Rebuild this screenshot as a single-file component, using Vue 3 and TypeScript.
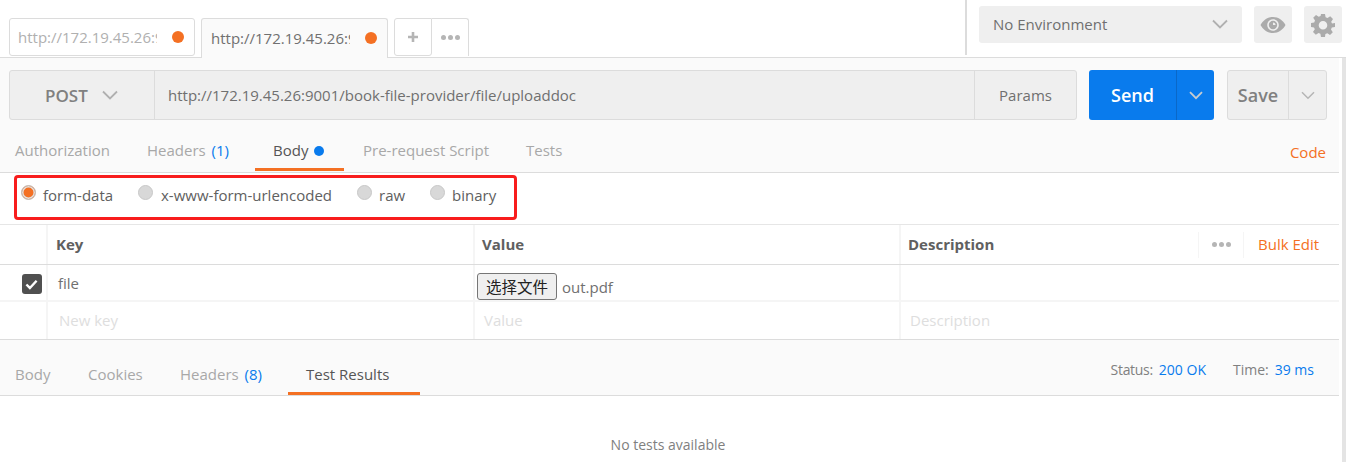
<script setup lang="ts">
const radios = [
  { label: 'form-data', on: true, cls: 'r1' },
  { label: 'x-www-form-urlencoded', on: false, cls: 'r2' },
  { label: 'raw', on: false, cls: 'r3' },
  { label: 'binary', on: false, cls: 'r4' },
]
</script>

<template>
  <div class="page">
    <div class="main">
      <header class="top">
        <div class="tabs">
          <div class="tab first">
            <span class="tab-url">http://172.19.45.26:9</span>
            <i class="dot"></i>
          </div>
          <div class="tab second">
            <span class="tab-url">http://172.19.45.26:9</span>
            <i class="dot"></i>
          </div>
          <div class="tab-tools">
            <div class="plus">
              <svg width="12" height="12" viewBox="0 0 12 12"><path d="M6 1v10M1 6h10" stroke="#b5b5b5" stroke-width="2.6" fill="none" /></svg>
            </div>
            <div class="more">
              <i></i><i></i><i></i>
            </div>
          </div>
        </div>
        <div class="env-area">
          <div class="env">
            <span>No Environment</span>
            <svg width="16" height="10" viewBox="0 0 16 10"><path d="M1 1.5l7 7 7-7" stroke="#b0b0b0" stroke-width="1.8" fill="none" /></svg>
          </div>
          <div class="icon-btn">
            <svg width="26" height="16" viewBox="0 0 26 16">
              <path fill-rule="evenodd" fill="#ababab" d="M13 0C7.5 0 3 3.4 0.5 8 3 12.6 7.5 16 13 16s10-3.4 12.5-8C23 3.4 18.5 0 13 0zm0 2.2c3.2 0 5.8 2.6 5.8 5.8s-2.6 5.8-5.8 5.8-5.8-2.6-5.8-5.8 2.6-5.8 5.8-5.8z" />
              <path fill-rule="evenodd" fill="#ababab" d="M13 3.8a4.2 4.2 0 1 0 0 8.4 4.2 4.2 0 0 0 0-8.4zm0 1.7a2.5 2.5 0 0 1 2.5 2.5h-2.5z" />
            </svg>
          </div>
          <div class="icon-btn">
            <svg width="24" height="24" viewBox="0 0 24 24">
              <path fill-rule="evenodd" fill="#ababab" d="M10 1h4l.6 3.2 1.900.8 2.700-1.800 2.800 2.800-1.800 2.700.8 1.900L24 10v4l-3.200.6-.8 1.900 1.800 2.700-2.800 2.800-2.700-1.800-1.900.8L14 24h-4l-.6-3.200-1.900-.8-2.700 1.800-2.800-2.800 1.800-2.700-.8-1.900L0 14v-4l3.200-.6.8-1.900-1.800-2.700 2.800-2.800 2.700 1.800 1.900-.8zM12 8a4.300 4.300 0 1 0 0 8.600A4.300 4.300 0 0 0 12 8z" />
            </svg>
          </div>
        </div>
      </header>

      <section class="url-row">
        <div class="url-box">
          <div class="method">
            <span>POST</span>
            <svg width="16" height="10" viewBox="0 0 16 10"><path d="M1 1.5l7 7 7-7" stroke="#b0b0b0" stroke-width="1.8" fill="none" /></svg>
          </div>
          <div class="url">http://172.19.45.26:9001/book-file-provider/file/uploaddoc</div>
          <div class="params">Params</div>
        </div>
        <div class="send">
          <span class="send-l">Send</span>
          <span class="send-r">
            <svg width="14" height="9" viewBox="0 0 14 9"><path d="M1 1.2l6 6 6-6" stroke="#c7ccd0" stroke-width="1.8" fill="none" /></svg>
          </span>
        </div>
        <div class="save">
          <span class="save-l">Save</span>
          <span class="save-r">
            <svg width="14" height="9" viewBox="0 0 14 9"><path d="M1 1.2l6 6 6-6" stroke="#b5b5b5" stroke-width="1.5" fill="none" /></svg>
          </span>
        </div>
      </section>

      <nav class="req-tabs">
        <span class="t-auth">Authorization</span>
        <span class="t-head">Headers <b class="count">(1)</b></span>
        <span class="t-body">Body <i class="blue-dot"></i></span>
        <span class="t-pre">Pre-request Script</span>
        <span class="t-tests">Tests</span>
        <span class="code">Code</span>
      </nav>

      <section class="radio-row">
        <div class="annot">
          <label v-for="r in radios" :key="r.label" class="radio" :class="r.cls">
            <i class="circle" :class="{ on: r.on }"></i>
            <span>{{ r.label }}</span>
          </label>
        </div>
      </section>

      <section class="table">
        <div class="row head">
          <div class="c0"></div>
          <div class="c1">Key</div>
          <div class="c2">Value</div>
          <div class="c3">
            <span>Description</span>
            <div class="bulk">
              <div class="dots"><i></i><i></i><i></i></div>
              <span class="bulk-edit">Bulk Edit</span>
            </div>
          </div>
        </div>
        <div class="row data">
          <div class="c0">
            <div class="check">
              <svg width="13" height="11" viewBox="0 0 12 10"><path d="M1.3 5l3.2 3.2L10.7 1.5" stroke="#fff" stroke-width="2.2" fill="none" /></svg>
            </div>
          </div>
          <div class="c1 file-key">file</div>
          <div class="c2 file-cell">
            <button type="button" class="file-btn">选择文件</button>
            <span class="file-name">out.pdf</span>
          </div>
          <div class="c3"></div>
        </div>
        <div class="row new">
          <div class="c0"></div>
          <div class="c1">New key</div>
          <div class="c2">Value</div>
          <div class="c3">Description</div>
        </div>
      </section>

      <nav class="res-tabs">
        <span class="rt-body">Body</span>
        <span class="rt-cookies">Cookies</span>
        <span class="rt-head">Headers <b class="count">(8)</b></span>
        <span class="rt-test">Test Results</span>
        <div class="status">
          <span class="s-l narrow">Status:</span><span class="s-v">200 OK</span>
          <span class="s-l s-time">Time:</span><span class="s-v">39 ms</span>
        </div>
      </nav>

      <section class="results">No tests available</section>
    </div>
    <div class="scrollbar"></div>
  </div>
</template>

<style>
html, body { margin: 0; padding: 0; background: #fff; overflow: hidden; }
</style>

<style scoped>
.page {
  width: 1346px;
  height: 462px;
  display: flex;
  overflow: hidden;
  font-family: "Open Sans", sans-serif;
  font-size: 15px;
  color: #808080;
  background: #fff;
}
.main { width: 1339px; flex: none; }
.scrollbar { flex: 1; background: #e4e4e4; margin: 58px 0 0 3px; }
i { display: block; font-style: normal; }
b { font-weight: 400; }

.top {
  height: 57px;
  width: 1346px;
  border-bottom: 1px solid #dcdcdc;
  display: flex;
  justify-content: space-between;
  background: #fff;
  box-sizing: content-box;
}
.tabs { display: flex; padding: 18px 0 0 9px; gap: 6px; }
.tab {
  box-sizing: border-box;
  width: 186px;
  height: 38px;
  border: 1px solid #dcdcdc;
  border-radius: 3px;
  display: flex;
  align-items: center;
  padding: 0 10px 0 8px;
  justify-content: space-between;
}
.tab.first { color: #b0b0b0; background: #fff; }
.tab.second { width: 187px; height: 40px; border-bottom: 0; border-radius: 3px 3px 0 0; background: #fafafa; color: #707070; padding-left: 9px; padding-bottom: 2px; }
.tab-url { width: 139px; overflow: hidden; white-space: nowrap; display: block; }
.dot { width: 12px; height: 12px; border-radius: 50%; background: #f47023; flex: none; }
.tab-tools { display: flex; }
.plus {
  box-sizing: border-box;
  width: 38px;
  height: 38px;
  border: 1px solid #dcdcdc;
  border-radius: 3px 0 3px 3px;
  display: flex;
  align-items: center;
  justify-content: center;
}
.more {
  box-sizing: border-box;
  width: 37px;
  height: 38px;
  border: 1px solid #dcdcdc;
  border-left: 0;
  border-bottom: 0;
  border-radius: 0 3px 0 0;
  display: flex;
  align-items: center;
  justify-content: center;
  gap: 2px;
}
.more i, .dots i { width: 5px; height: 5px; border-radius: 50%; background: #b5b5b5; }
.env-area {
  width: 381px;
  height: 55px;
  box-sizing: border-box;
  border-left: 2px solid #dcdcdc;
  padding: 6px 4px 0 12px;
  display: flex;
  gap: 12px;
  align-items: flex-start;
}
.env {
  width: 263px;
  height: 37px;
  box-sizing: border-box;
  background: #efefef;
  border-radius: 3px;
  padding: 0 14px 1px;
  display: flex;
  align-items: center;
  justify-content: space-between;
  color: #707070;
}
.icon-btn {
  width: 38px;
  height: 37px;
  background: #efefef;
  border-radius: 3px;
  display: flex;
  align-items: center;
  justify-content: center;
}

.url-row {
  height: 72px;
  background: #fafafa;
  box-sizing: border-box;
  padding: 12px 0 0 9px;
  display: flex;
}
.url-box {
  width: 1068px;
  height: 50px;
  box-sizing: border-box;
  border: 1px solid #dcdcdc;
  border-radius: 3px;
  background: #efefef;
  display: flex;
  align-items: stretch;
}
.method {
  box-sizing: border-box;
  width: 145px;
  border-right: 1px solid #dcdcdc;
  display: flex;
  align-items: center;
  gap: 14px;
  padding-left: 35px;
  font-size: 17px;
  font-weight: 600;
  color: #808080;
}
.url { flex: 1; display: flex; align-items: center; padding-left: 13px; color: #707070; }
.params { width: 102px; box-sizing: border-box; border-left: 1px solid #dcdcdc; display: flex; align-items: center; justify-content: center; color: #707070; }
.send {
  margin-left: 12px;
  width: 125px;
  height: 50px;
  background: #097bed;
  border-radius: 3px;
  display: flex;
  color: #fff;
  font-size: 18px;
  font-weight: 600;
}
.send-l { width: 87px; display: flex; align-items: center; justify-content: center; border-right: 1px solid #0a68c8; }
.send-r { flex: 1; display: flex; align-items: center; justify-content: center; }
.save {
  margin-left: 13px;
  width: 100px;
  height: 50px;
  box-sizing: border-box;
  background: #efefef;
  border: 1px solid #dcdcdc;
  border-radius: 3px;
  display: flex;
  color: #808080;
  font-size: 18px;
  font-weight: 600;
}
.save-l { width: 60px; display: flex; align-items: center; justify-content: center; border-right: 1px solid #dcdcdc; }
.save-r { flex: 1; display: flex; align-items: center; justify-content: center; }

.req-tabs {
  height: 43px;
  box-sizing: border-box;
  background: #fafafa;
  border-bottom: 1px solid #dcdcdc;
  display: flex;
  align-items: flex-start;
  padding: 11px 13px 0 15px;
  color: #a8a8a8;
  line-height: 19px;
}
.t-auth { width: 132px; }
.t-head { width: 126px; }
.count { color: #097bed; margin-left: 2px; }
.t-body { position: relative; width: 90px; color: #555; display: flex; align-items: center; gap: 6px; }
.t-body::after {
  content: "";
  position: absolute;
  left: -18px;
  width: 89px;
  top: 27px;
  height: 3px;
  background: #f47023;
}
.blue-dot { width: 10px; height: 10px; border-radius: 50%; background: #097bed; }
.t-pre { width: 163px; }
.code { margin-left: auto; margin-top: 2px; color: #f47023; }

.radio-row { height: 52px; box-sizing: border-box; background: #fff; padding: 2px 0 0 14px; border-bottom: 1px solid #e6e6e6; }
.annot {
  box-sizing: border-box;
  width: 503px;
  height: 45px;
  border: 3px solid #f81d1d;
  border-radius: 4px;
  display: flex;
}
.radio { display: flex; align-items: flex-start; gap: 7px; color: #606060; line-height: 19px; padding-top: 8px; }
.circle { width: 15px; height: 15px; box-sizing: border-box; border-radius: 50%; background: #d8d8d8; border: 1px solid #c8c8c8; margin-top: -1px; flex: none; }
.circle.on { background: #f47023; box-shadow: inset 0 0 0 1.5px #e2e2e2; border-color: #c0c0c0; }
.r1 { margin-left: 4px; width: 117px; }
.r2 { width: 219px; gap: 8px; }
.r3 { width: 73px; }

.table { background: #fff; }
.row { display: flex; box-sizing: border-box; }
.row > div { box-sizing: border-box; }
.c0 { width: 48px; flex: none; border-right: 2px solid #f5f5f5; display: flex; align-items: center; justify-content: center; }
.c1 { width: 427px; flex: none; padding-left: 8px; border-right: 2px solid #f5f5f5; }
.c2 { width: 426px; flex: none; padding-left: 7px; border-right: 2px solid #f5f5f5; }
.c3 { flex: 1; padding-left: 7px; }
.head { height: 40px; border-bottom: 1px solid #dcdcdc; font-weight: 700; color: #606060; line-height: 39px; }
.head .c3 { display: flex; justify-content: space-between; padding-right: 0; }
.bulk { display: flex; align-items: center; font-weight: 400; }
.dots { width: 46px; height: 26px; border-left: 1px solid #f5f5f5; border-right: 1px solid #f5f5f5; display: flex; align-items: center; justify-content: center; gap: 2px; box-sizing: border-box; }
.bulk-edit { color: #f47023; width: 95px; padding-left: 14px; box-sizing: border-box; white-space: nowrap; }
.data { height: 37px; border-bottom: 2px solid #f5f5f5; }
.data .c0 { padding-left: 17px; padding-top: 3px; }
.check { width: 20px; height: 20px; background: #505050; border-radius: 3px; display: flex; align-items: center; justify-content: center; }
.file-key { line-height: 37px; padding-left: 10px; color: #707070; }
.file-cell { display: flex; align-items: flex-start; padding-left: 2px; padding-top: 8px; }
.file-btn {
  width: 80px;
  height: 27px;
  box-sizing: border-box;
  padding: 0 0 2px;
  font-family: "Noto Sans CJK SC", sans-serif;
  font-size: 15.5px;
  color: #222;
  background: #efefef;
  border: 1px solid #767676;
  border-radius: 3px;
}
.file-name { margin-left: 5px; color: #707070; line-height: 27px; padding-top: 1px; }
.new { height: 38px; border-bottom: 1px solid #dcdcdc; color: #dedede; line-height: 36px; }
.new .c1 { padding-left: 11px; }
.new .c2 { padding-left: 9px; }
.new .c3 { padding-left: 9px; }

.res-tabs {
  height: 56px;
  box-sizing: border-box;
  background: #fafafa;
  border-bottom: 1px solid #dcdcdc;
  display: flex;
  padding: 25px 25px 0 15px;
  color: #a8a8a8;
  line-height: 19px;
  align-items: flex-start;
}
.rt-body { width: 73px; }
.rt-cookies { width: 92px; }
.rt-head { width: 126px; }
.rt-test { position: relative; color: #555; }
.rt-test::after {
  content: "";
  position: absolute;
  left: -18px;
  right: -31px;
  top: 27px;
  height: 3px;
  background: #f47023;
}
.status { margin-left: auto; margin-top: -5px; display: flex; font-size: 14px; }
.s-l { color: #808080; }
.narrow { letter-spacing: -0.3px; }
.s-v { color: #097bed; margin-left: 6px; }
.s-time { margin-left: 27px; }
.results { height: 66px; background: #fff; text-align: center; padding-top: 39px; box-sizing: border-box; color: #808080; line-height: 19px; padding-right: 3px; font-size: 14px; }
</style>
